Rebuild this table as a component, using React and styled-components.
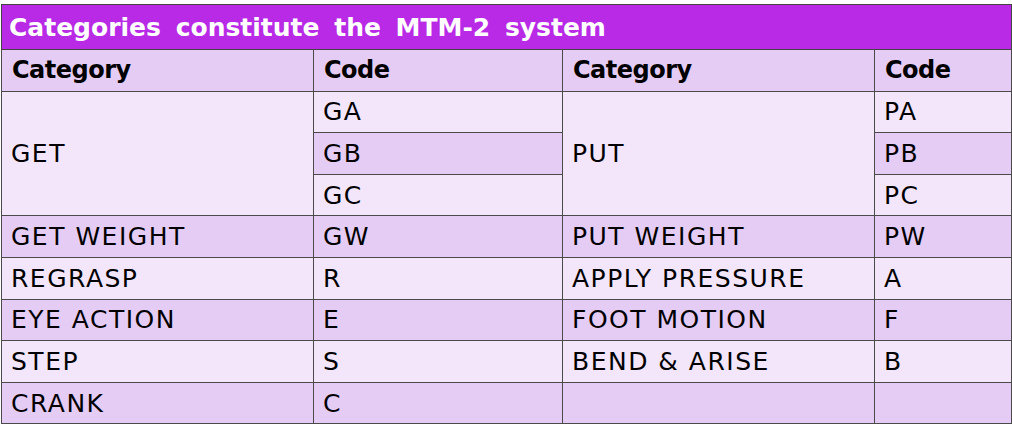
import React from "react";
import styled, { createGlobalStyle } from "styled-components";

const GlobalStyle = createGlobalStyle`
  html, body { margin: 0; padding: 0; background: #ffffff; }
  body { font-family: "Comic Sans MS", "DejaVu Sans", sans-serif; }
`;

const Page = styled.div`
  padding: 4px 0 0 1px;
`;

const Table = styled.table`
  width: 1010px;
  border-collapse: collapse;
  table-layout: fixed;
  font-family: "Comic Sans MS", "DejaVu Sans", sans-serif;
  color: #000;
  border: 1.5px solid #555;
`;

const TitleCell = styled.td`
  background: #b82ae6;
  color: #ffffff;
  font-weight: bold;
  font-size: 25px;
  word-spacing: 6px;
  height: 44px;
  padding: 0 0 0 7px;
  border: 1px solid #444;
  line-height: 1;
`;

const Row = styled.tr`
  height: 41.6px;
`;

const Cell = styled.td`
  background: ${(p) => (p.$tone === "dark" ? "#e5ccf5" : "#f3e6fa")};
  font-size: ${(p) => (p.$head ? "24px" : "25px")};
  letter-spacing: ${(p) => (p.$head ? "-0.5px" : "1.5px")};
  font-weight: ${(p) => (p.$head ? "bold" : "normal")};
  padding: 0 0 0 ${(p) => (p.$head ? "10px" : "9px")};
  border: 1px solid #4a4a4a;
  white-space: nowrap;
  line-height: 1;
  vertical-align: middle;
`;

const rows = [
  { tone: "light", a: "GET", aSpan: 3, b: "GA", c: "PUT", cSpan: 3, d: "PA" },
  { tone: "dark", b: "GB", d: "PB" },
  { tone: "light", b: "GC", d: "PC" },
  { tone: "dark", a: "GET WEIGHT", b: "GW", c: "PUT WEIGHT", d: "PW" },
  { tone: "light", a: "REGRASP", b: "R", c: "APPLY PRESSURE", d: "A" },
  { tone: "dark", a: "EYE ACTION", b: "E", c: "FOOT MOTION", d: "F" },
  { tone: "light", a: "STEP", b: "S", c: "BEND & ARISE", d: "B" },
  { tone: "dark", a: "CRANK", b: "C", c: "", d: "" },
];

export default function App() {
  return (
    <>
      <GlobalStyle />
      <Page>
        <Table>
          <colgroup>
            <col style={{ width: 312 }} />
            <col style={{ width: 249 }} />
            <col style={{ width: 312 }} />
            <col style={{ width: 137 }} />
          </colgroup>
          <tbody>
            <tr>
              <TitleCell colSpan={4}>Categories constitute the MTM-2 system</TitleCell>
            </tr>
            <Row>
              <Cell $head $tone="dark">Category</Cell>
              <Cell $head $tone="dark">Code</Cell>
              <Cell $head $tone="dark">Category</Cell>
              <Cell $head $tone="dark">Code</Cell>
            </Row>
            {rows.map((r, i) => (
              <Row key={i}>
                {r.a !== undefined && (
                  <Cell $tone={r.aSpan ? "light" : r.tone} rowSpan={r.aSpan || 1}>
                    {r.a}
                  </Cell>
                )}
                <Cell $tone={r.tone}>{r.b}</Cell>
                {r.c !== undefined && (
                  <Cell $tone={r.cSpan ? "light" : r.tone} rowSpan={r.cSpan || 1}>
                    {r.c}
                  </Cell>
                )}
                <Cell $tone={r.tone}>{r.d}</Cell>
              </Row>
            ))}
          </tbody>
        </Table>
      </Page>
    </>
  );
}
